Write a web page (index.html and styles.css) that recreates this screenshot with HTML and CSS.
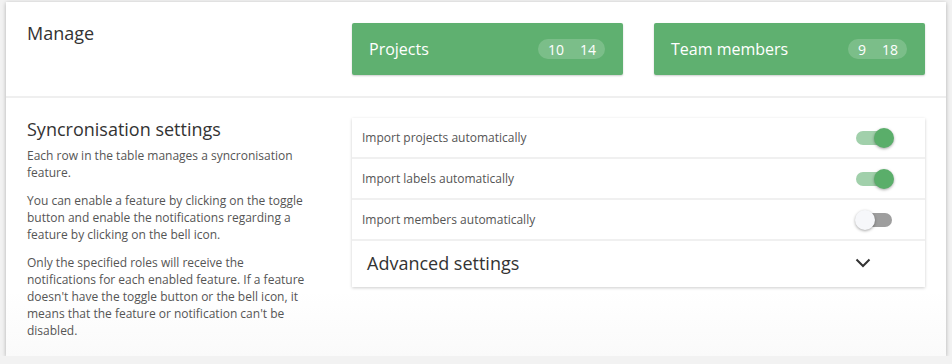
FILE: index.html
```html
<!DOCTYPE html>
<html lang="en">
<head>
    <meta charset="UTF-8">
    <meta name="viewport" content="width=device-width, initial-scale=1.0">
    <title>Integration settings</title>
    <link rel="stylesheet" href="styles.css">
</head>
<body>

<div class="card">
    <div class="section manage">
        <h2>Manage</h2>
        <div class="tiles">
            <div class="tile">
                <span>Projects</span>
                <span class="badge"><span>10</span><span>14</span></span>
            </div>
            <div class="tile">
                <span>Team members</span>
                <span class="badge"><span>9</span><span>18</span></span>
            </div>
        </div>
    </div>

    <div class="section sync">
        <div class="intro">
            <h3>Syncronisation settings</h3>
            <p>Each row in the table manages a syncronisation feature.</p>
            <p>You can enable a feature by clicking on the toggle button and enable the notifications regarding a feature by clicking on the bell icon.</p>
            <p>Only the specified roles will receive the notifications for each enabled feature. If a feature doesn't have the toggle button or the bell icon, it means that the feature or notification can't be disabled.</p>
        </div>

        <div class="panel">
            <div class="row">
                <span>Import projects automatically</span>
                <span class="toggle on"></span>
            </div>
            <div class="row">
                <span>Import labels automatically</span>
                <span class="toggle on"></span>
            </div>
            <div class="row">
                <span>Import members automatically</span>
                <span class="toggle"></span>
            </div>
            <div class="row advanced">
                <span>Advanced settings</span>
                <svg width="16" height="10" viewBox="0 0 16 10"><path d="M1.5 1.5 L8 8 L14.5 1.5" fill="none" stroke="#333" stroke-width="2"/></svg>
            </div>
        </div>
    </div>
</div>

</body>
</html>
```

FILE: styles.css
```css
body {
    font-family: "Open Sans", "Liberation Sans", sans-serif;
    margin: 0;
    padding: 2px 6px 0;
    background-color: #f2f2f2;
    color: #333;
}

.card {
    background-color: white;
    box-shadow: 0 1px 4px rgba(0, 0, 0, 0.28);
    height: 354px;
    display: flex;
    flex-direction: column;
}

.section {
    display: grid;
    grid-template-columns: 325px 1fr;
    padding: 0 21px;
}

.manage {
    height: 96px;
    padding-top: 20px;
    box-sizing: border-box;
    border-bottom: 2px solid #efefef;
}

h2 {
    font-size: 18px;
    font-weight: 400;
    margin: 0;
    line-height: 22px;
}

.tiles {
    display: flex;
    gap: 31px;
    padding-top: 1px;
}

.tile {
    flex: 1;
    height: 52px;
    background-color: #5fb070;
    border-radius: 2px;
    box-shadow: 0 1px 2px rgba(0, 0, 0, 0.2);
    color: white;
    font-size: 16px;
    display: flex;
    align-items: center;
    justify-content: space-between;
    padding: 0 18px 0 17px;
}

.badge {
    display: flex;
    gap: 16px;
    background-color: rgba(255, 255, 255, 0.18);
    border-radius: 10px;
    height: 20px;
    align-items: center;
    padding: 0 9px 0 10px;
    font-size: 14px;
}

.sync {
    flex: 1;
    padding-top: 20px;
    background: linear-gradient(#fff 75%, #fafafa);
}

.intro {
    padding-right: 43px;
}

h3 {
    font-size: 18px;
    font-weight: 400;
    margin: 0 0 7px;
    line-height: 22px;
}

.intro p {
    font-size: 12px;
    line-height: 17px;
    color: #555;
    margin: 0 0 11px;
}

.panel {
    align-self: start;
    box-shadow: 0 1px 3px rgba(0, 0, 0, 0.2);
}

.row {
    height: 39px;
    display: flex;
    align-items: center;
    justify-content: space-between;
    padding: 0 33px 0 10px;
    font-size: 12px;
    color: #555;
    border-bottom: 2px solid #f0f0f0;
}

.row.advanced {
    height: 44px;
    border-bottom: none;
    font-size: 18px;
    color: #333;
    padding: 0 54px 2px 15px;
}

.toggle {
    position: relative;
    width: 36px;
    height: 14px;
    border-radius: 7px;
    background-color: #9e9e9e;
}

.toggle::after {
    content: "";
    position: absolute;
    top: -3px;
    left: -1px;
    width: 20px;
    height: 20px;
    border-radius: 50%;
    background-color: #f6f7fa;
    box-shadow: 0 1px 3px rgba(0, 0, 0, 0.35);
}

.toggle.on {
    background-color: #a1d0ab;
}

.toggle.on::after {
    left: auto;
    right: -2px;
    background-color: #5aae6a;
}
```
